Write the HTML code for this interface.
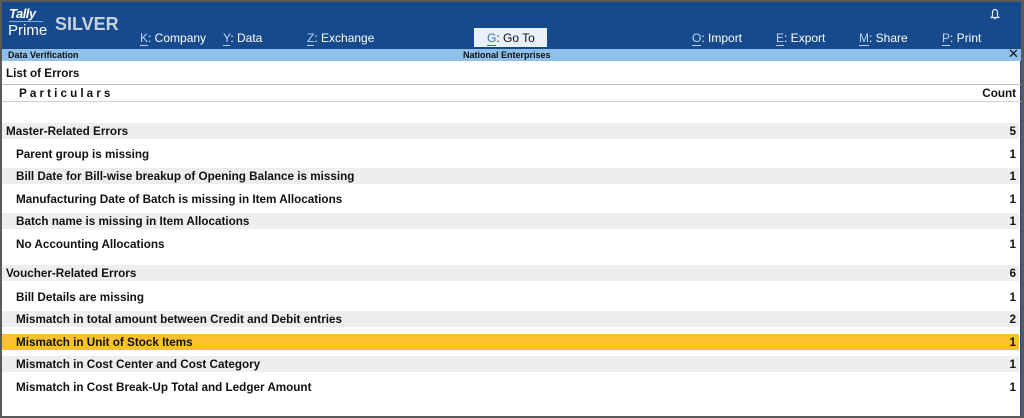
<!DOCTYPE html>
<html><head><meta charset="utf-8"><style>
*{margin:0;padding:0;box-sizing:border-box}
body{width:1024px;height:418px;background:#5a5a5a;position:relative;overflow:hidden;font-family:"Liberation Sans",Arial,sans-serif}
#frame{position:absolute;left:2px;top:2px;width:1019px;height:414px;background:#fff;border-right:1px solid #1a4b8c}
#hdr{position:absolute;left:0;top:0;width:1019px;height:47px;background:#164a8c}
.m{position:absolute;top:29px;color:#fff;font-size:12px}
.m b{font-weight:normal;color:#bcd4f2;border-bottom:1px solid #bcd4f2}
#bar{position:absolute;left:0;top:47px;width:1019px;height:12px;background:#8fc0ea;font-size:9px;font-weight:bold;color:#111;line-height:12px}
.r{position:absolute;left:0;width:1017px;height:16px;font-size:11.7px;font-weight:bold;color:#111;line-height:17px}
.r span{position:absolute;right:3px;top:0}
.g{background:#eeeeee}
.y{background:#fcc22e}
</style></head><body>
<div id="frame">
<div id="hdr">
 <div style="position:absolute;left:7px;top:4px;color:#fff;font-style:italic;font-weight:bold;font-size:13px;letter-spacing:-0.5px">Tally</div>
 <div style="position:absolute;left:7px;top:19px;width:34px;height:1px;background:#7fb0e0"></div>
 <div style="position:absolute;left:6px;top:20px;color:#fff;font-size:15px">Prime</div>
 <div style="position:absolute;left:53px;top:12px;color:#c8d3e0;font-size:18px;font-weight:bold">SILVER</div>
 <div class="m" style="left:138px"><b>K</b>: Company</div>
 <div class="m" style="left:221px"><b>Y</b>: Data</div>
 <div class="m" style="left:305px"><b>Z</b>: Exchange</div>
 <div style="position:absolute;left:472px;top:26px;width:73px;height:19px;background:#e8f0fa"></div>
 <div class="m" style="left:485px;color:#111"><b style="color:#3a6fb8;border-color:#3a6fb8">G</b>: Go To</div>
 <div class="m" style="left:690px"><b>O</b>: Import</div>
 <div class="m" style="left:774px"><b>E</b>: Export</div>
 <div class="m" style="left:857px"><b>M</b>: Share</div>
 <div class="m" style="left:940px"><b>P</b>: Print</div>
 <svg style="position:absolute;left:988px;top:6px" width="10" height="12" viewBox="0 0 10 12"><path d="M5 1.5C3 1.5 2.5 3 2.5 5V8L1.2 9.5H8.8L7.5 8V5C7.5 3 7 1.5 5 1.5Z M4 10.5H6" fill="none" stroke="#dce6f2" stroke-width="1.2"/></svg>
</div>
<div id="bar"><span style="position:absolute;left:6px">Data Verification</span><span style="position:absolute;left:461px">National Enterprises</span><span style="position:absolute;left:1006px;font-size:13px;font-weight:normal;top:-1px">✕</span></div>
<div class="r" style="top:63px;left:4px">List of Errors</div>
<div style="position:absolute;left:0;top:82px;width:1019px;height:1px;background:#bdbdbd"></div>
<div class="r" style="top:83px;letter-spacing:3.1px;padding-left:17px">Particulars<span style="letter-spacing:0;right:3px">Count</span></div>
<div style="position:absolute;left:0;top:99px;width:1019px;height:1px;background:#cfcfcf"></div>
<div class="r g" style="top:121px;padding-left:4px">Master-Related Errors<span>5</span></div>
<div class="r" style="top:144px;padding-left:14px">Parent group is missing<span>1</span></div>
<div class="r g" style="top:166px;padding-left:14px">Bill Date for Bill-wise breakup of Opening Balance is missing<span>1</span></div>
<div class="r" style="top:189px;padding-left:14px">Manufacturing Date of Batch is missing in Item Allocations<span>1</span></div>
<div class="r g" style="top:211px;padding-left:14px">Batch name is missing in Item Allocations<span>1</span></div>
<div class="r" style="top:234px;padding-left:14px">No Accounting Allocations<span>1</span></div>
<div class="r g" style="top:263px;padding-left:4px">Voucher-Related Errors<span>6</span></div>
<div class="r" style="top:287px;padding-left:14px">Bill Details are missing<span>1</span></div>
<div class="r g" style="top:309px;padding-left:14px">Mismatch in total amount between Credit and Debit entries<span>2</span></div>
<div class="r y" style="top:332px;padding-left:14px">Mismatch in Unit of Stock Items<span>1</span></div>
<div class="r g" style="top:354px;padding-left:14px">Mismatch in Cost Center and Cost Category<span>1</span></div>
<div class="r" style="top:377px;padding-left:14px">Mismatch in Cost Break-Up Total and Ledger Amount<span>1</span></div>
</div>
</body></html>
